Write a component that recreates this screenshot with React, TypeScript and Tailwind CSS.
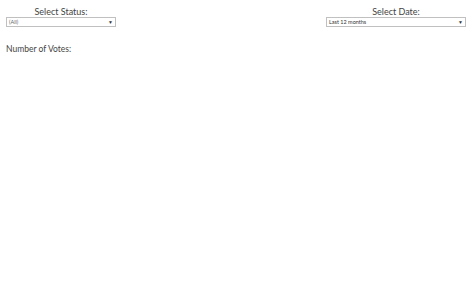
export default function App() {
  return (
    <div className="w-[474px] h-[292px] bg-white text-[#333] relative" style={{ fontFamily: 'Lato, "Liberation Sans", sans-serif' }}>
      <div className="flex justify-between pl-[6px] pr-[8px] pt-[6px]">
        <div className="w-[110px] flex flex-col">
          <div className="text-[9px] leading-[11px] text-center text-[#444]">Select Status:</div>
          <div className="h-[10px] border border-[#c0c0c0] flex items-center justify-between px-[2px]">
            <span className="text-[5.5px] leading-[6px] text-[#666]">(All)</span>
            <span className="text-[5px] leading-[6px] text-[#333]">▼</span>
          </div>
        </div>
        <div className="w-[140px] flex flex-col">
          <div className="text-[9px] leading-[11px] text-center text-[#444]">Select Date:</div>
          <div className="h-[10px] border border-[#c0c0c0] flex items-center justify-between px-[2px]">
            <span className="text-[5.5px] leading-[6px] text-[#333]">Last 12 months</span>
            <span className="text-[5px] leading-[6px] text-[#333]">▼</span>
          </div>
        </div>
      </div>
      <div className="px-[6px] mt-[17px] text-[8.5px] leading-[10px] text-[#444]">Number of Votes:</div>
    </div>
  );
}
